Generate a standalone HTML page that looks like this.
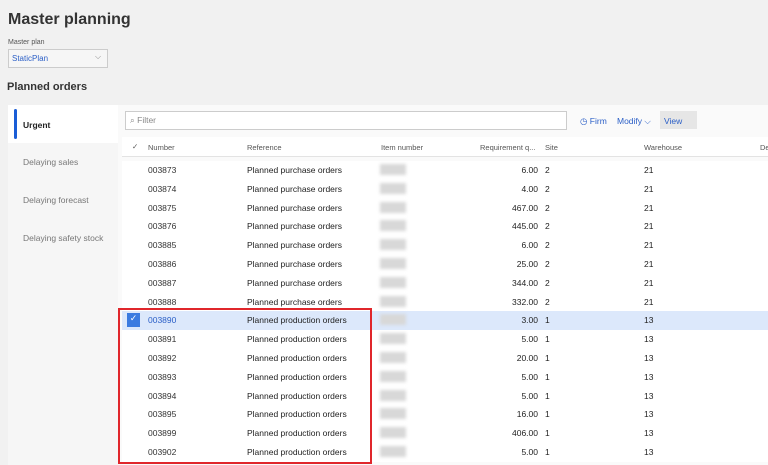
<!DOCTYPE html><html><head><style>
body{margin:0;width:768px;height:465px;background:#f1f1f1;font-family:"Liberation Sans",sans-serif;overflow:hidden;position:relative;color:#222}
.a{position:absolute}
.r{position:absolute;left:122px;width:646px;height:19px;font-size:8.5px;background:#fff}
.r span{position:absolute;top:4px}
.blur{position:absolute;left:258px;top:3px;width:26px;height:11px;background:#d8d8d8;filter:blur(1.5px)}
</style></head><body>
<div class="a" style="left:8px;top:11px;font-size:16px;font-weight:bold;color:#333">Master planning</div>
<div class="a" style="left:8px;top:39px;font-size:7px;color:#555">Master plan</div>
<div class="a" style="left:8px;top:49px;width:98px;height:17px;border:1px solid #ccc;background:#f6f6f6"><span class="a" style="left:3px;top:4px;font-size:8px;color:#2b5fc7">StaticPlan</span><span class="a" style="left:86px;top:2px;font-size:8px;color:#888">⌵</span></div>
<div class="a" style="left:7px;top:81px;font-size:11px;font-weight:bold;color:#333">Planned orders</div>
<div class="a" style="left:8px;top:105px;width:110px;height:360px;background:#f6f6f6"></div>
<div class="a" style="left:8px;top:105px;width:110px;height:38px;background:#fff"></div>
<div class="a" style="left:14px;top:109px;width:3px;height:30px;background:#1a5dd6;border-radius:2px"></div>
<div class="a" style="left:23px;top:120px;font-size:8.5px;font-weight:bold">Urgent</div>
<div class="a" style="left:23px;top:157px;font-size:8.5px;color:#777">Delaying sales</div>
<div class="a" style="left:23px;top:195px;font-size:8.5px;color:#777">Delaying forecast</div>
<div class="a" style="left:23px;top:233px;font-size:8.5px;color:#777">Delaying safety stock</div>
<div class="a" style="left:118px;top:105px;width:650px;height:360px;background:#fafafa"></div>
<div class="a" style="left:125px;top:111px;width:440px;height:17px;border:1px solid #ccc;background:#fff"><span class="a" style="left:4px;top:3px;font-size:8.5px;color:#888">⌕ Filter</span></div>
<div class="a" style="left:580px;top:116px;font-size:8.5px;color:#2b5fc7">◷ Firm</div>
<div class="a" style="left:617px;top:116px;font-size:8.5px;color:#2b5fc7">Modify ⌵</div>
<div class="a" style="left:660px;top:111px;width:37px;height:18px;background:#e6e6e6"></div>
<div class="a" style="left:664px;top:116px;font-size:8.5px;color:#2b5fc7">View</div>
<div class="a" style="left:122px;top:137px;width:646px;height:19px;background:#fff;border-bottom:1px solid #e3e3e3;font-size:7.5px;color:#555">
<span class="a" style="left:10px;top:5px">✓</span><span class="a" style="left:26px;top:6px">Number</span><span class="a" style="left:125px;top:6px">Reference</span><span class="a" style="left:259px;top:6px">Item number</span><span class="a" style="left:358px;top:6px">Requirement q...</span><span class="a" style="left:423px;top:6px">Site</span><span class="a" style="left:522px;top:6px">Warehouse</span><span class="a" style="left:638px;top:6px">De</span></div>
<div id="rows"></div>
<script>
var d=[["003873","purchase","6.00",2,21],["003874","purchase","4.00",2,21],["003875","purchase","467.00",2,21],["003876","purchase","445.00",2,21],["003885","purchase","6.00",2,21],["003886","purchase","25.00",2,21],["003887","purchase","344.00",2,21],["003888","purchase","332.00",2,21],["003890","production","3.00",1,13],["003891","production","5.00",1,13],["003892","production","20.00",1,13],["003893","production","5.00",1,13],["003894","production","5.00",1,13],["003895","production","16.00",1,13],["003899","production","406.00",1,13],["003902","production","5.00",1,13]];
var h="";d.forEach(function(x,i){var y=161+i*18.8,s=i==8;
h+='<div class="r" style="top:'+y+'px;'+(s?'background:#dce8fb':'')+'">'+(s?'<span style="left:5px;top:2px;width:13px;height:14px;background:#3b7be0;color:#fff;text-align:center;font-size:9px">✓</span>':'')+'<span style="left:26px;color:'+(s?'#2b5fc7':'#333')+'">'+x[0]+'</span><span style="left:125px">Planned '+x[1]+' orders</span><div class="blur"></div><span style="left:360px;width:56px;text-align:right">'+x[2]+'</span><span style="left:423px">'+x[3]+'</span><span style="left:522px">'+x[4]+'</span></div>';});
document.getElementById("rows").innerHTML=h;
</script>
<div class="a" style="left:118px;top:308px;width:250px;height:152px;border:2px solid #e0262b"></div>
</body></html>
